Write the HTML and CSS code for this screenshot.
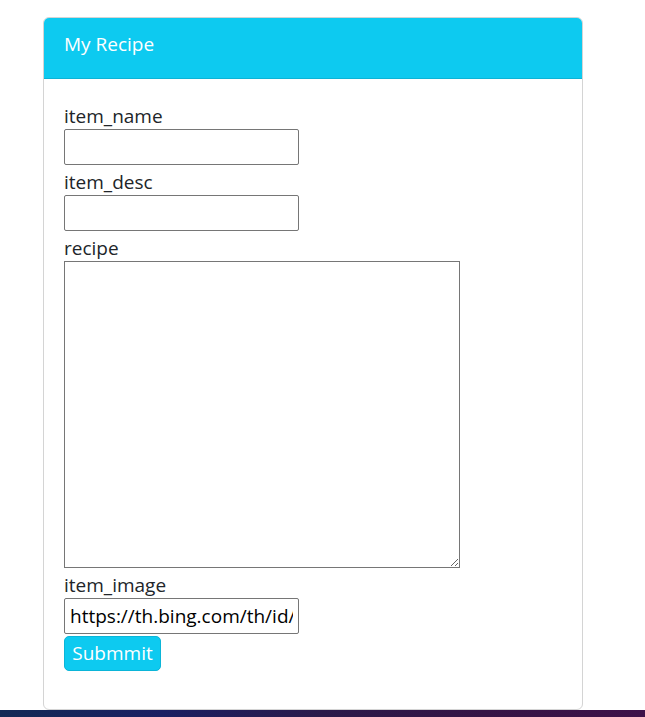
FILE: index.html
```html
<!DOCTYPE html>
<html>
<head>
<meta charset="utf-8">
<title>My Recipe</title>
<link rel="stylesheet" href="styles.css">
</head>
<body>
<div class="page">
  <div class="card">
    <div class="card-header">My Recipe</div>
    <div class="card-body">
      <form class="form">
        <label class="label">item_name</label>
        <input class="field" type="text">
        <label class="label">item_desc</label>
        <input class="field" type="text">
        <label class="label">recipe</label>
        <textarea class="area"></textarea>
        <label class="label">item_image</label>
        <input class="field" type="text" value="https://th.bing.com/th/id/OIP.recipe-image">
        <button class="btn" type="button">Submmit</button>
      </form>
    </div>
  </div>
</div>
<div class="bar"></div>
</body>
</html>
```
FILE: styles.css
```css
html, body {
  margin: 0;
  padding: 0;
  background: #fff;
}
body {
  font-family: "Open Sans", "Noto Sans", sans-serif;
  color: #212529;
  font-size: 19px;
}
.page {
  padding: 17px 0 0 43px;
  height: 710px;
  box-sizing: border-box;
}
.card {
  width: 540px;
  height: 693px;
  box-sizing: border-box;
  border: 1px solid #d4d4d4;
  border-radius: 6px;
  overflow: hidden;
}
.card-header {
  background: #0dcaf0;
  color: #fff;
  height: 61px;
  box-sizing: border-box;
  border-bottom: 1px solid #0cb3d6;
  padding: 0 0 8px 20px;
  display: flex;
  align-items: center;
  font-size: 19px;
}
.card-body {
  padding: 20px;
}
.form {
  display: flex;
  flex-direction: column;
  align-items: flex-start;
}
.label {
  display: block;
  line-height: 30px;
  height: 28px;
  padding-top: 2px;
}
.field {
  width: 235px;
  height: 36px;
  box-sizing: border-box;
  border: 1px solid #767676;
  border-radius: 2px;
  font-family: inherit;
  font-size: 19px;
  color: #000;
  padding: 0 5px;
  margin: 0;
}
.area {
  width: 396px;
  height: 307px;
  box-sizing: border-box;
  border: 1px solid #767676;
  border-radius: 0;
  margin: 0;
  font-family: inherit;
  font-size: 19px;
  resize: both;
}
.btn {
  margin-top: 2px;
  background: #0dcaf0;
  color: #fff;
  border: 1px solid #0bb5d8;
  border-radius: 5px;
  font-family: inherit;
  font-size: 19px;
  height: 35px;
  width: 97px;
  padding: 0;
  line-height: 33px;
}
.bar {
  height: 7px;
  background: linear-gradient(90deg, #132a55 0%, #1a1f62 25%, #2b1a4a 50%, #351445 75%, #3e1149 100%);
}
```
